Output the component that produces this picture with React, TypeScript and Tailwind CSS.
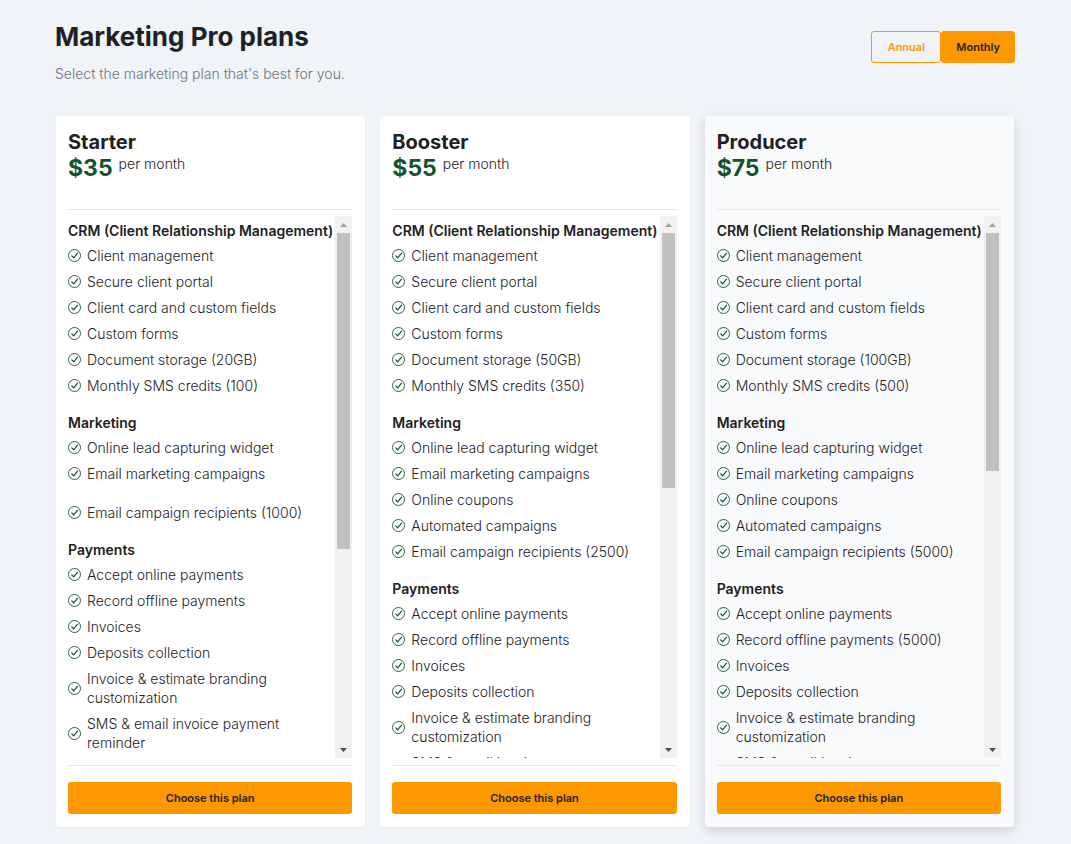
import { useRef, useState } from "react";

const crm = (storage: string, sms: string) => ({
  title: "CRM (Client Relationship Management)",
  items: [
    "Client management",
    "Secure client portal",
    "Client card and custom fields",
    "Custom forms",
    `Document storage (${storage})`,
    `Monthly SMS credits (${sms})`,
  ],
});

const payments = (offline = "Record offline payments") => ({
  title: "Payments",
  items: [
    "Accept online payments",
    offline,
    "Invoices",
    "Deposits collection",
    "Invoice & estimate branding customization",
    "SMS & email invoice payment reminder",
  ],
});

const plans = [
  {
    name: "Starter", price: "$35", thumb: 316, featured: false,
    groups: [
      crm("20GB", "100"),
      {
        title: "Marketing",
        // an empty entry leaves a gap in the list
        items: ["Online lead capturing widget", "Email marketing campaigns", "", "Email campaign recipients (1000)"],
      },
      payments(),
    ],
  },
  {
    name: "Booster", price: "$55", thumb: 255, featured: false,
    groups: [
      crm("50GB", "350"),
      {
        title: "Marketing",
        items: ["Online lead capturing widget", "Email marketing campaigns", "Online coupons", "Automated campaigns", "Email campaign recipients (2500)"],
      },
      payments(),
    ],
  },
  {
    name: "Producer", price: "$75", thumb: 238, featured: true,
    groups: [
      crm("100GB", "500"),
      {
        title: "Marketing",
        items: ["Online lead capturing widget", "Email marketing campaigns", "Online coupons", "Automated campaigns", "Email campaign recipients (5000)"],
      },
      payments("Record offline payments (5000)"),
    ],
  },
];

type Plan = (typeof plans)[number];

function CheckIcon() {
  return (
    <svg viewBox="0 0 16 16" fill="none" stroke="#14532d" className="size-[13px] shrink-0" aria-hidden="true">
      <circle cx="8" cy="8" r="7.4" strokeWidth="1.1" />
      <path d="M4.6 8.4 7 10.8l4.8-5.6" strokeWidth="1.5" strokeLinecap="round" strokeLinejoin="round" />
    </svg>
  );
}

function FeatureList({ plan }: { plan: Plan }) {
  const ref = useRef<HTMLDivElement>(null);
  const [progress, setProgress] = useState(0);

  const onScroll = () => {
    const el = ref.current;
    if (!el) return;
    const max = el.scrollHeight - el.clientHeight;
    setProgress(max > 0 ? el.scrollTop / max : 0);
  };

  const step = (dy: number) => ref.current?.scrollBy({ top: dy });

  return (
    <div className="flex h-[542px]">
      <div ref={ref} onScroll={onScroll} className="min-w-0 flex-1 overflow-y-auto pt-[5px] [scrollbar-width:none]">
        {plan.groups.map((group) => (
          <section key={group.title} className="mb-[18px]">
            <h3 className="mb-1.5 text-sm leading-[19px] font-semibold whitespace-nowrap text-[#212121]">{group.title}</h3>
            <ul className="flex flex-col gap-[7px]">
              {group.items.map((item, i) =>
                item ? (
                  <li key={i} className="flex items-center gap-1.5 pr-5 text-sm leading-[19px] font-light">
                    <CheckIcon />
                    {item}
                  </li>
                ) : (
                  <li key={i} aria-hidden="true" className="h-1.5" />
                ),
              )}
            </ul>
          </section>
        ))}
      </div>

      {/* Scrollbar */}
      <div className="flex w-[17px] shrink-0 flex-col bg-[#f1f1f1]">
        <button type="button" aria-label="Scroll up" onClick={() => step(-40)} className="flex h-[17px] items-center justify-center">
          <svg width="7" height="4" viewBox="0 0 7 4" fill="#a3a3a3"><path d="M3.5 0 7 4H0z" /></svg>
        </button>
        <div className="flex-1 px-0.5">
          <div
            className="bg-[#c1c1c1]"
            style={{ height: plan.thumb, transform: `translateY(${progress * (508 - plan.thumb)}px)` }}
          />
        </div>
        <button type="button" aria-label="Scroll down" onClick={() => step(40)} className="flex h-[17px] items-center justify-center">
          <svg width="7" height="4" viewBox="0 0 7 4" fill="#505050"><path d="M0 0h7L3.5 4z" /></svg>
        </button>
      </div>
    </div>
  );
}

function PlanCard({ plan }: { plan: Plan }) {
  return (
    <article
      className={`min-w-0 rounded pt-[13px] pr-[13px] pb-[13px] pl-3 ${
        plan.featured ? "bg-[#f9fafc] shadow-[0_4px_12px_rgba(0,0,0,0.14)]" : "bg-white shadow-[0_1px_2px_rgba(0,0,0,0.05)]"
      }`}
    >
      <h2 className="text-xl leading-[26px] font-bold text-[#212121]">{plan.name}</h2>
      <div className="flex h-[54px] items-start gap-1.5">
        <span className="text-[23px] leading-[26px] font-bold text-[#14532d]">{plan.price}</span>
        <span className="text-sm leading-[18px] font-light">per month</span>
      </div>
      <div className="border-y border-[#e3e5e6] pt-1.5 pb-[7px]">
        <FeatureList plan={plan} />
      </div>
      <button type="button" className="mt-4 h-8 w-full rounded-[3px] bg-[#ff9800] text-[11px] font-semibold text-[#212121]">
        Choose this plan
      </button>
    </article>
  );
}

export default function App() {
  const [billing, setBilling] = useState("Monthly");

  return (
    <main className="min-h-screen bg-[#f0f3f8] pt-[22px] pr-14 pb-4 pl-[55px] font-['Inter',sans-serif] text-[#212325]">
      <header className="mb-8 flex items-start justify-between">
        <div>
          <h1 className="text-[26px] leading-[30px] font-bold text-[#212121]">Marketing Pro plans</h1>
          <p className="mt-3 text-sm leading-5 font-light text-[#6c757d]">Select the marketing plan that's best for you.</p>
        </div>
        <div className="mt-[9px] flex">
          {["Annual", "Monthly"].map((period) => (
            <button
              key={period}
              type="button"
              aria-pressed={billing === period}
              onClick={() => setBilling(period)}
              className={`h-8 min-w-[70px] rounded-[3px] border border-[#ff9800] px-3.5 text-[11px] font-semibold ${
                billing === period ? "bg-[#ff9800] text-[#212121]" : "text-[#ff9800]"
              }`}
            >
              {period}
            </button>
          ))}
        </div>
      </header>

      <div className="grid grid-cols-3 gap-[15px] px-px">
        {plans.map((plan) => (
          <PlanCard key={plan.name} plan={plan} />
        ))}
      </div>
    </main>
  );
}
